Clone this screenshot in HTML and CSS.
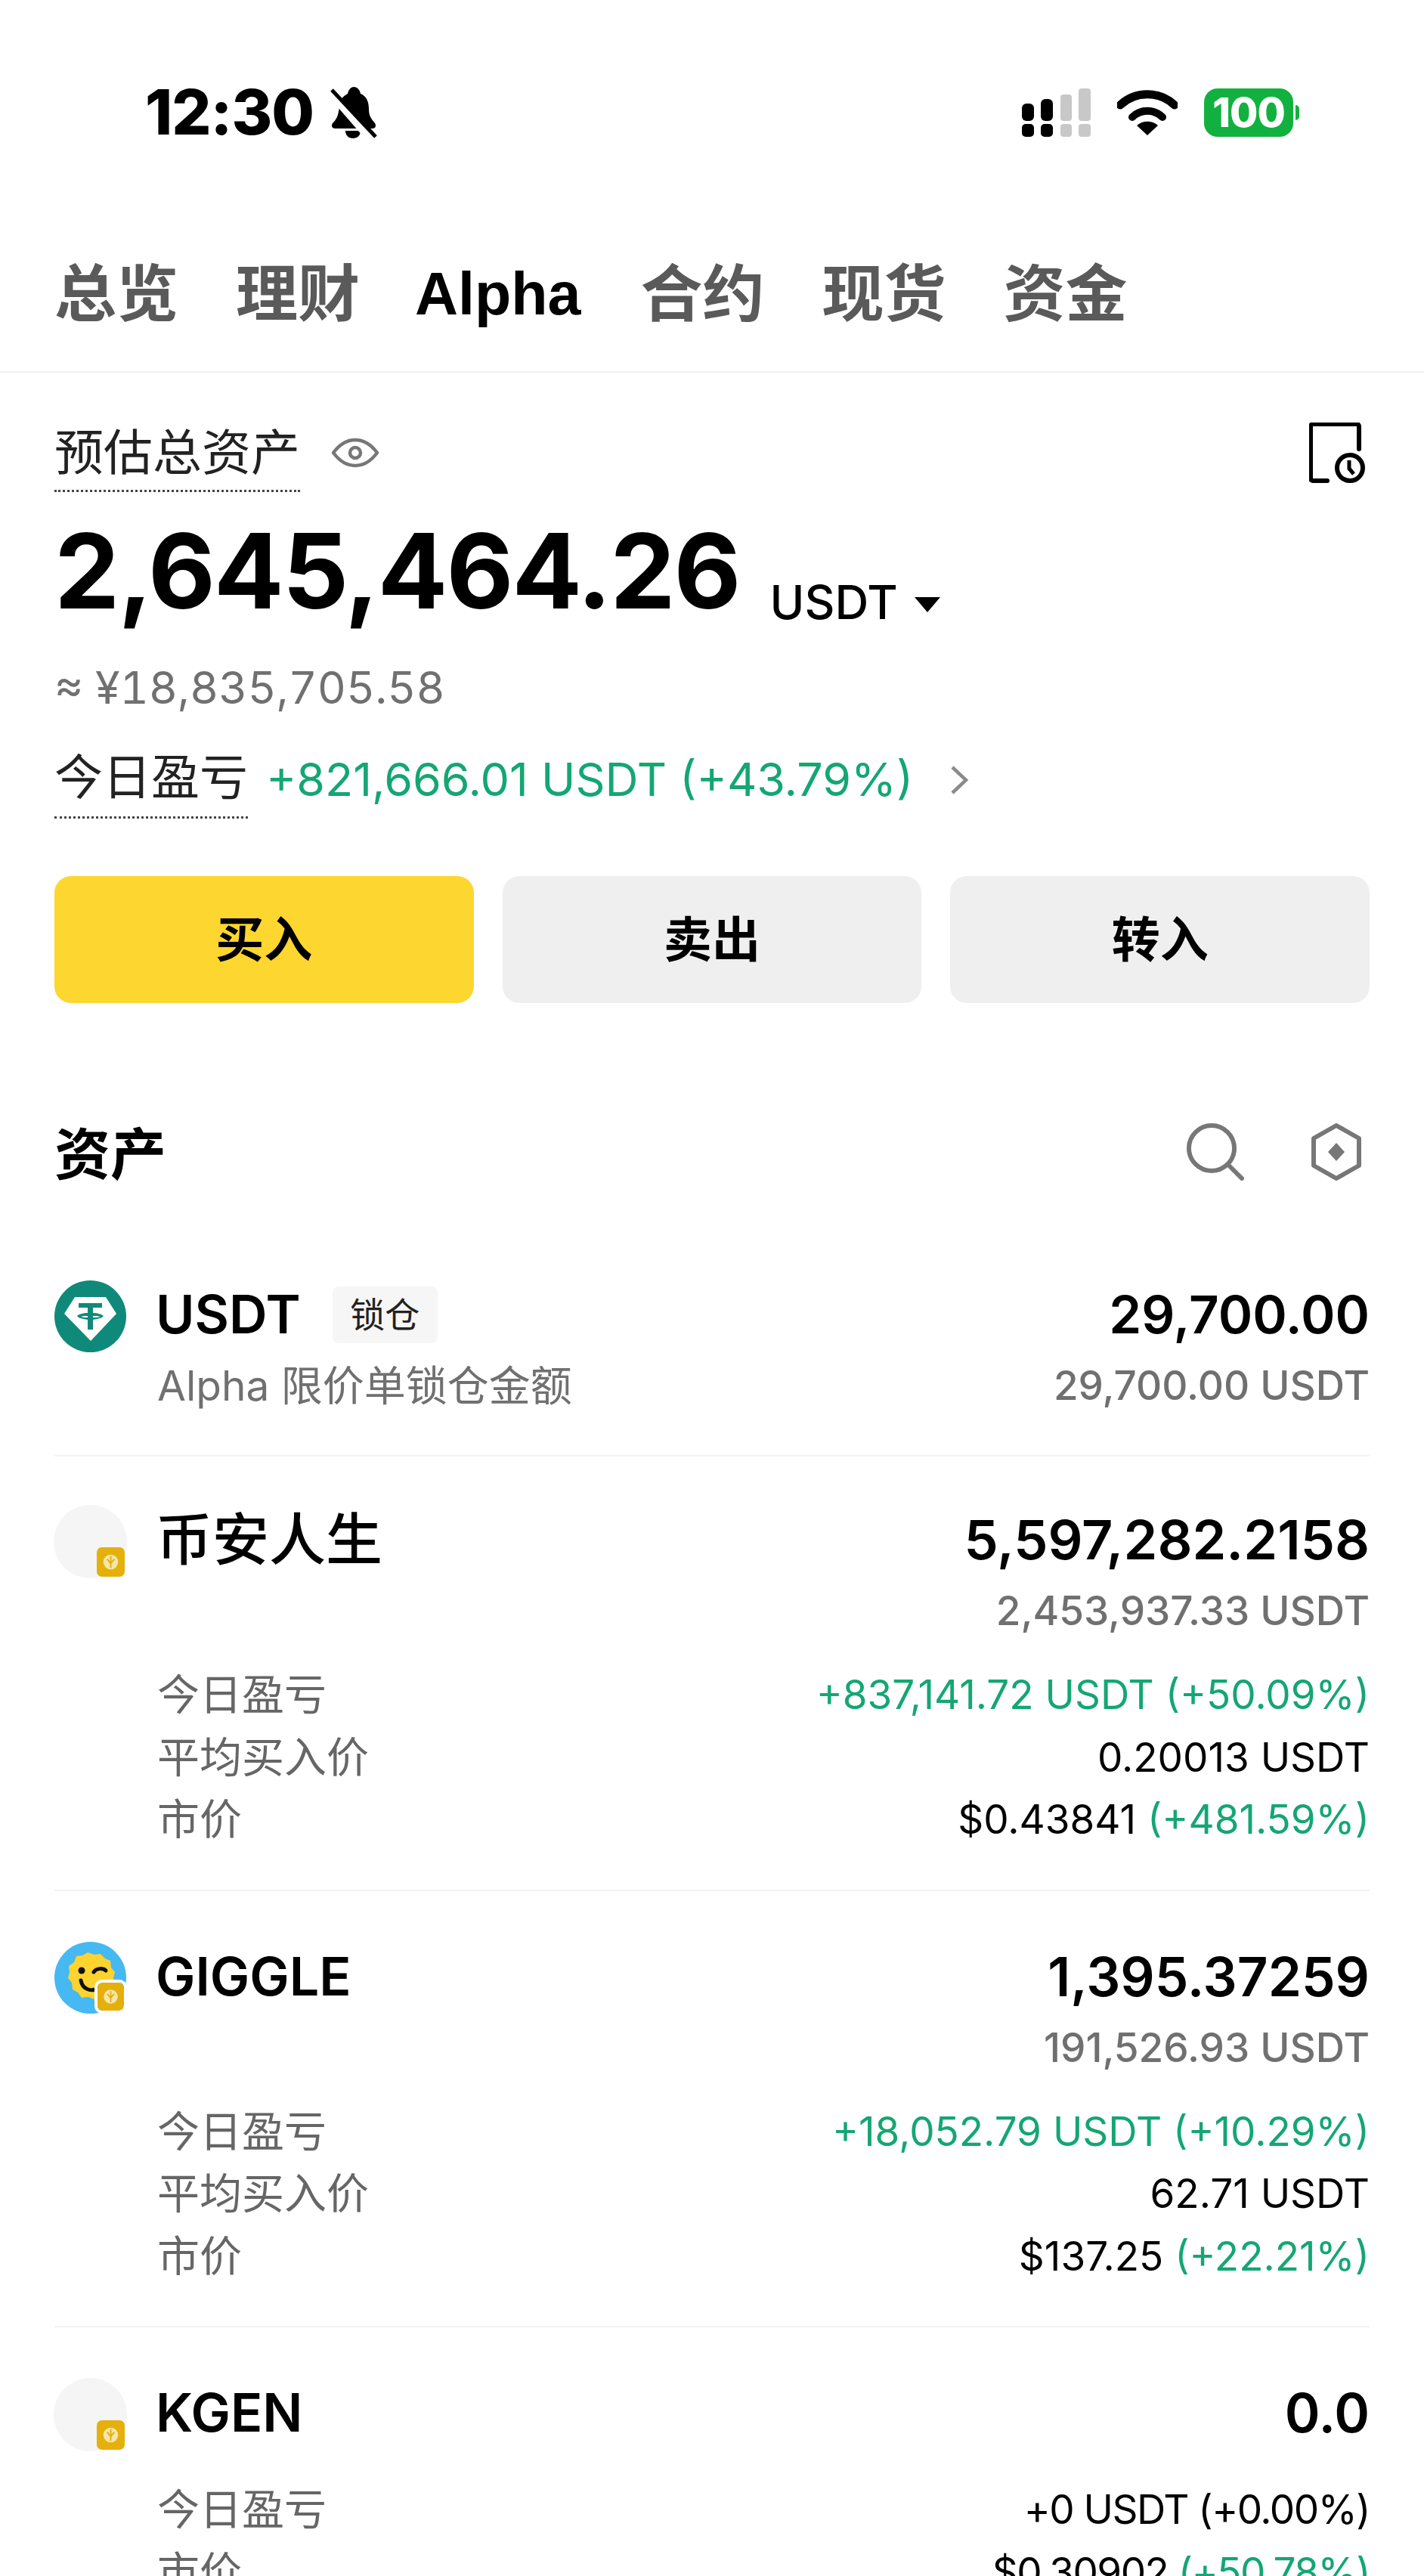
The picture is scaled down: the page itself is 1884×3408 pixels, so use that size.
FILE: index.html
```html
<!DOCTYPE html>
<html lang="zh-CN">
<head>
    <meta charset="UTF-8" />
    <meta name="viewport" content="width=device-width, initial-scale=1" />
    <title>Alpha 资产</title>
    <link rel="stylesheet" href="styles.css">
</head>
<body>
    <div class="page">
        <header class="status-bar">
            <div class="status-left">
                <span class="time">12:30</span>
                <svg class="bell" viewBox="0 0 64 68">
                    <path d="M32 0c5 0 8 4 9 9 8 3 11 11 11 20 0 9 3 13 8 19 2 3 1 7-3 7H7c-4 0-5-4-3-7 5-5 7-9 8-16 1-3 1-6 1-9C14 14 21 11 24 9c1-5 4-9 8-9z" fill="#000"/>
                    <path d="M21 58h20c0 6-4 10-10 10s-10-4-10-10z" fill="#000"/>
                    <path d="M0 6l54 62" stroke="#fff" stroke-width="11"/>
                    <path d="M3 4l58 62" stroke="#000" stroke-width="5"/>
                </svg>
            </div>
            <div class="status-right">
                <svg class="signal" viewBox="0 0 91 64">
                    <rect x="0" y="20" width="16" height="23" rx="6" fill="#000"/>
                    <rect x="0" y="47" width="16" height="17" rx="5" fill="#000"/>
                    <rect x="25" y="14" width="16" height="29" rx="6" fill="#000"/>
                    <rect x="25" y="47" width="16" height="17" rx="5" fill="#000"/>
                    <rect x="51" y="8" width="15" height="35" rx="4" fill="#c8c8c8"/>
                    <rect x="51" y="47" width="15" height="17" rx="4" fill="#c8c8c8"/>
                    <rect x="75" y="0" width="16" height="43" rx="4" fill="#c8c8c8"/>
                    <rect x="75" y="47" width="16" height="17" rx="4" fill="#c8c8c8"/>
                </svg>
                <svg class="wifi" viewBox="0 0 80 60">
                    <path d="M4 20C24 1 56 1 76 20" fill="none" stroke="#000" stroke-width="11" stroke-linecap="round"/>
                    <path d="M20 36C31 25 49 25 60 36" fill="none" stroke="#000" stroke-width="10" stroke-linecap="round"/>
                    <path d="M26 47c8-7 20-7 28 0L40 60z" fill="#000"/>
                </svg>
                <div class="battery">
                    <span class="battery-body">100</span>
                    <span class="battery-cap"></span>
                </div>
            </div>
        </header>

        <nav class="tabs">
            <span class="tab">总览</span>
            <span class="tab">理财</span>
            <span class="tab tab-active">Alpha</span>
            <span class="tab">合约</span>
            <span class="tab">现货</span>
            <span class="tab">资金</span>
        </nav>

        <section class="summary">
            <div class="summary-title">
                <span class="dotted title-label">预估总资产</span>
                <svg class="eye" viewBox="0 0 64 40">
                    <path d="M3 20C12 8 21 3 32 3s20 5 29 17C52 32 43 37 32 37S12 32 3 20z" fill="none" stroke="#777" stroke-width="4.5" stroke-linejoin="round"/>
                    <circle cx="32" cy="20" r="7" fill="none" stroke="#777" stroke-width="4.5"/>
                </svg>
                <svg class="history" viewBox="0 0 74 80">
                    <path d="M24 77H5a3 3 0 0 1-3-3V5a3 3 0 0 1 3-3h58a3 3 0 0 1 3 3v30" fill="none" stroke="#000" stroke-width="6" stroke-linecap="round"/>
                    <circle cx="54" cy="60" r="17" fill="none" stroke="#000" stroke-width="6"/>
                    <path d="M53 50v11l6 7" fill="none" stroke="#000" stroke-width="5"/>
                </svg>
            </div>
            <div class="total">
                <span class="total-value">2,645,464.26</span>
                <span class="total-unit">USDT</span>
                <span class="caret"></span>
            </div>
            <div class="total-cny">≈ ¥18,835,705.58</div>
            <div class="today">
                <span class="dotted today-label">今日盈亏</span>
                <span class="today-value up">+821,666.01 USDT (+43.79%)</span>
                <svg class="chevron" viewBox="0 0 26 40">
                    <path d="M4 3l18 17L4 37" fill="none" stroke="#8a8a8a" stroke-width="4.5"/>
                </svg>
            </div>
            <div class="actions">
                <div class="action action-primary">买入</div>
                <div class="action">卖出</div>
                <div class="action">转入</div>
            </div>
        </section>

        <section class="assets">
            <div class="assets-head">
                <h2>资产</h2>
                <div class="assets-tools">
                    <svg class="tool" viewBox="0 0 76 76">
                        <circle cx="33" cy="33" r="30" fill="none" stroke="#777" stroke-width="6"/>
                        <path d="M55 55l18 18" stroke="#777" stroke-width="6" stroke-linecap="round"/>
                    </svg>
                    <svg class="tool tool-hex" viewBox="0 0 66 76">
                        <path d="M33 3l30 17v36L33 73 3 56V20z" fill="none" stroke="#777" stroke-width="6" stroke-linejoin="round"/>
                        <path d="M33 26l11 12-11 12-11-12z" fill="#777"/>
                    </svg>
                </div>
            </div>

            <div class="asset asset-usdt">
                <div class="asset-main">
                    <svg class="coin" viewBox="0 0 95 95">
                        <circle cx="47.5" cy="47.5" r="47.5" fill="#0f8a7a"/>
                        <path d="M27 22h41l14 22-34 36L13 44z" fill="#fff"/>
                        <path d="M32 30h31v6H51v7c6 0 12 2 14 4-2 3-8 4-14 5v13h-7V52c-6-1-12-2-14-5 2-2 8-4 14-4v-7H32zm12 17c-5 0-7 0-9 1 3 1 6 1 13 1s10 0 13-1c-2-1-5-1-10-1v2h-7z" fill="#0f8a7a"/>
                    </svg>
                    <div class="asset-name-wrap">
                        <span class="asset-name">USDT</span>
                        <span class="tag">锁仓</span>
                    </div>
                    <div class="asset-amount">29,700.00</div>
                </div>
                <div class="asset-sub">
                    <span class="asset-note">Alpha 限价单锁仓金额</span>
                    <span class="asset-worth">29,700.00 USDT</span>
                </div>
            </div>

            <div class="asset asset-bnlife">
                <div class="asset-main">
                    <div class="coin-wrap">
                        <div class="coin-blank"></div>
                        <svg class="badge" viewBox="0 0 38 40">
                            <rect width="38" height="40" rx="7" fill="#e5b00c"/>
                            <circle cx="19" cy="20" r="10" fill="#f6e6ad"/>
                            <path d="M19 12v16M14 16l5 6 5-6" stroke="#e5b00c" stroke-width="2" fill="none"/>
                        </svg>
                    </div>
                    <div class="asset-name-wrap"><span class="asset-name asset-name-cn">币安人生</span></div>
                    <div class="asset-amount">5,597,282.2158</div>
                </div>
                <div class="asset-sub">
                    <span></span>
                    <span class="asset-worth">2,453,937.33 USDT</span>
                </div>
                <div class="details">
                    <div class="detail"><span class="detail-label">今日盈亏</span><span class="up">+837,141.72 USDT (+50.09%)</span></div>
                    <div class="detail"><span class="detail-label">平均买入价</span><span>0.20013 USDT</span></div>
                    <div class="detail"><span class="detail-label">市价</span><span>$0.43841 <span class="up">(+481.59%)</span></span></div>
                </div>
            </div>

            <div class="asset">
                <div class="asset-main">
                    <div class="coin-wrap">
                        <svg class="coin" viewBox="0 0 95 95">
                            <circle cx="47.5" cy="47.5" r="47.5" fill="#46b8f2"/>
                            <path d="M44 14l9 3 8-1 6 6 7 3 1 9 5 6-2 8 1 9-7 5-3 8-9 1-7 5-8-3-9 1-5-7-7-4-1-9-5-6 2-8-1-8 7-5 3-8 8-1z" fill="#fdd32f"/>
                            <circle cx="36" cy="38" r="4.5" fill="#111"/>
                            <path d="M52 40c3-5 12-6 16-2M35 51c2 12 14 16 24 10" fill="none" stroke="#111" stroke-width="5" stroke-linecap="round"/>
                        </svg>
                        <svg class="badge badge-ring" viewBox="0 0 38 40">
                            <rect width="38" height="40" rx="7" fill="#e5b00c"/>
                            <circle cx="19" cy="20" r="10" fill="#f6e6ad"/>
                            <path d="M19 12v16M14 16l5 6 5-6" stroke="#e5b00c" stroke-width="2" fill="none"/>
                        </svg>
                    </div>
                    <div class="asset-name-wrap"><span class="asset-name">GIGGLE</span></div>
                    <div class="asset-amount">1,395.37259</div>
                </div>
                <div class="asset-sub">
                    <span></span>
                    <span class="asset-worth">191,526.93 USDT</span>
                </div>
                <div class="details">
                    <div class="detail"><span class="detail-label">今日盈亏</span><span class="up">+18,052.79 USDT (+10.29%)</span></div>
                    <div class="detail"><span class="detail-label">平均买入价</span><span>62.71 USDT</span></div>
                    <div class="detail"><span class="detail-label">市价</span><span>$137.25 <span class="up">(+22.21%)</span></span></div>
                </div>
            </div>

            <div class="asset asset-last">
                <div class="asset-main">
                    <div class="coin-wrap">
                        <div class="coin-blank"></div>
                        <svg class="badge" viewBox="0 0 38 40">
                            <rect width="38" height="40" rx="7" fill="#e5b00c"/>
                            <circle cx="19" cy="20" r="10" fill="#f6e6ad"/>
                            <path d="M19 12v16M14 16l5 6 5-6" stroke="#e5b00c" stroke-width="2" fill="none"/>
                        </svg>
                    </div>
                    <div class="asset-name-wrap"><span class="asset-name">KGEN</span></div>
                    <div class="asset-amount">0.0</div>
                </div>
                <div class="details">
                    <div class="detail"><span class="detail-label">今日盈亏</span><span class="tight">+0 USDT (+0.00%)</span></div>
                    <div class="detail"><span class="detail-label">市价</span><span class="tight">$0.30902 <span class="up">(+50.78%)</span></span></div>
                </div>
            </div>
        </section>
    </div>
</body>
</html>
```

FILE: styles.css
```css
html, body {
    margin: 0;
    height: 3408px;
    overflow: hidden;
    background: #fff;
}
.page {
    width: 1884px;
    font-family: Inter, "Noto Sans CJK SC", sans-serif;
    color: #000;
}
.up {
    color: #14a673;
}

/* status bar */
.status-bar {
    height: 298px;
    box-sizing: border-box;
    padding: 0 165px 0 192px;
    display: flex;
    justify-content: space-between;
    align-items: center;
}
.status-left {
    display: flex;
    align-items: center;
    gap: 21px;
}
.time {
    font-size: 82px;
    font-weight: 800;
    letter-spacing: -1px;
    line-height: 1;
}
.bell {
    width: 64px;
    height: 68px;
}
.status-right {
    display: flex;
    align-items: center;
}
.signal {
    width: 91px;
    height: 64px;
}
.wifi {
    width: 80px;
    height: 60px;
    margin-left: 35px;
}
.battery {
    display: flex;
    align-items: center;
    margin-left: 35px;
}
.battery-body {
    width: 118px;
    height: 64px;
    border-radius: 18px;
    background: #12b13f;
    color: #fff;
    font-size: 54px;
    font-weight: 800;
    line-height: 64px;
    text-align: center;
    letter-spacing: -1px;
}
.battery-cap {
    width: 5px;
    height: 20px;
    margin-left: 3px;
    border-radius: 0 6px 6px 0;
    background: #12b13f;
}

/* tabs */
.tabs {
    height: 195px;
    box-sizing: border-box;
    padding: 0 72px 11px;
    display: flex;
    align-items: center;
    gap: 76px;
    border-bottom: 2px solid #f2f2f2;
}
.tab {
    font-size: 82px;
    font-weight: 700;
    color: #5a5a5a;
    line-height: 1.2;
}
.tab-active {
    font-family: "Liberation Sans", sans-serif;
    font-size: 79px;
    font-weight: 700;
    color: #000;
    margin: 0 3px 0 -3px;
}

/* summary */
.summary {
    padding: 60px 72px 0;
}
.summary-title {
    display: flex;
    align-items: flex-start;
}
.dotted {
    border-bottom: 3px dotted #444;
}
.title-label {
    font-size: 65px;
    line-height: 92px;
    padding-bottom: 3px;
    color: #222;
}
.eye {
    width: 64px;
    height: 40px;
    margin: 26px 0 0 41px;
}
.history {
    width: 74px;
    height: 80px;
    margin: 6px 6px 0 auto;
}
.total {
    margin-top: 29px;
    height: 150px;
    display: flex;
    align-items: flex-end;
    line-height: 150px;
}
.total-value {
    font-size: 137px;
    font-weight: 700;
    letter-spacing: -2px;
}
.total-unit {
    font-size: 62px;
    font-weight: 500;
    line-height: 66px;
    margin-left: 40px;
}
.caret {
    width: 0;
    height: 0;
    margin: 0 0 20px 22px;
    border-left: 17px solid transparent;
    border-right: 17px solid transparent;
    border-top: 20px solid #000;
}
.total-cny {
    margin-top: 40px;
    font-size: 59px;
    font-variant-numeric: tabular-nums;
    line-height: 80px;
    color: #707070;
}
.today {
    margin-top: 36px;
    display: flex;
    align-items: flex-start;
}
.today-label {
    font-size: 64px;
    line-height: 84px;
    padding-bottom: 10px;
    color: #222;
}
.today-value {
    font-size: 61px;
    line-height: 84px;
    margin: 3px 0 0 24px;
}
.chevron {
    width: 26px;
    height: 40px;
    margin: 26px 0 0 48px;
}
.actions {
    margin-top: 76px;
    display: grid;
    grid-template-columns: repeat(3, 1fr);
    gap: 38px;
}
.action {
    height: 168px;
    line-height: 168px;
    text-align: center;
    border-radius: 22px;
    background: #efefef;
    font-size: 64px;
    font-weight: 700;
}
.action-primary {
    background: #fdd62f;
}

/* asset list */
.assets {
    padding: 144px 72px 0;
}
.assets-head {
    height: 100px;
    display: flex;
    justify-content: space-between;
    align-items: center;
}
.assets-head h2 {
    margin: 0;
    font-size: 74px;
    font-weight: 700;
}
.assets-tools {
    display: flex;
    align-items: center;
    gap: 89px;
    margin: 6px 11px 0 0;
}
.tool {
    width: 76px;
    height: 76px;
}
.tool-hex {
    width: 66px;
}
.asset {
    padding: 68px 0 51px;
    border-bottom: 2px solid #f2f2f2;
}
.asset-usdt {
    margin-top: 123px;
    padding: 0 0 43px;
}
.asset-usdt .asset-amount {
    font-size: 69px;
}
.asset-bnlife {
    padding-top: 65px;
}
.asset-bnlife .asset-amount {
    font-size: 72px;
}
.asset-last {
    border-bottom: none;
}
.asset-main {
    display: flex;
    height: 90px;
    align-items: flex-start;
}
.coin {
    width: 95px;
    height: 95px;
    flex: none;
}
.coin-wrap {
    position: relative;
    width: 95px;
    height: 95px;
    flex: none;
    margin-top: -1px;
}
.coin-blank {
    width: 97px;
    height: 97px;
    margin-left: -1px;
    border-radius: 50%;
    background: #f5f5f5;
}
.badge {
    position: absolute;
    right: 2px;
    bottom: 0;
    width: 37px;
    height: 39px;
}
.badge-ring {
    width: 35px;
    height: 37px;
    border: 4px solid #fff;
    border-radius: 10px;
    right: -1px;
}
.asset-name-wrap {
    display: flex;
    align-items: center;
    gap: 42px;
    margin-left: 39px;
    height: 90px;
}
.asset-name {
    font-size: 70px;
    font-weight: 600;
    line-height: 90px;
}
.asset-name-cn {
    font-size: 75px;
    font-weight: 500;
}
.tag {
    width: 139px;
    height: 75px;
    line-height: 75px;
    text-align: center;
    border-radius: 8px;
    background: #f6f6f6;
    font-size: 46px;
    color: #222;
}
.asset-amount {
    margin-left: auto;
    font-size: 71px;
    font-weight: 600;
    line-height: 90px;
}
.asset-sub {
    display: flex;
    justify-content: space-between;
    height: 98px;
    line-height: 98px;
    color: #707070;
}
.asset-note {
    margin-left: 136px;
    font-size: 55px;
}
.asset-worth {
    font-size: 53px;
    font-weight: 500;
}
.details {
    margin: 21px 0 0 136px;
}
.asset-last .details {
    margin-top: 42px;
}
.detail {
    display: flex;
    justify-content: space-between;
    height: 82.5px;
    line-height: 82.5px;
    font-size: 53px;
}
.detail-label {
    font-size: 56px;
    color: #666;
}
.tight {
    letter-spacing: -1.5px;
}
```
